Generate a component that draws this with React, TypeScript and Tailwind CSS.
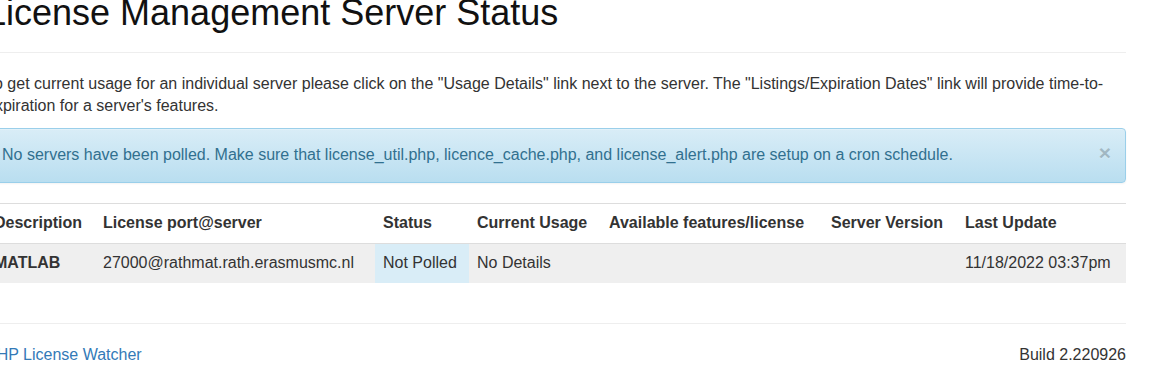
import React from "react";

const cols = [
  { label: "Description", w: "w-[109px]" },
  { label: "License port@server", w: "w-[280px]" },
  { label: "Status", w: "w-[94px]" },
  { label: "Current Usage", w: "w-[132px]" },
  { label: "Available features/license", w: "w-[222px]" },
  { label: "Server Version", w: "w-[134px]" },
  { label: "Last Update", w: "w-[169px]" },
];

export default function App() {
  return (
    <div className="bg-white min-h-screen overflow-hidden font-['Liberation_Sans',Arial,sans-serif] text-[16px] leading-[1.428571] text-[#333]">
      <div className="ml-[-14px] w-[1140px]">
        <div className="pb-[9px] border-b border-[#eee] mb-5">
          <h1 className="mt-[-7px] mb-[10px] text-[36px] leading-[1.1] font-normal text-[#111]">
            License Management Server Status
          </h1>
        </div>

        <p className="mb-[10px]">
          To get current usage for an individual server please click on the "Usage Details" link next to the server. The "Listings/Expiration Dates" link will provide time-to-expiration for a server's features.
        </p>

        <div className="relative mb-5 p-[15px] pr-[35px] rounded-[4px] border border-[#9acfea] text-[#31708f] bg-[linear-gradient(to_bottom,#d9edf7_0%,#b9def0_100%)] shadow-[inset_0_1px_0_rgba(255,255,255,0.25),0_1px_2px_rgba(0,0,0,0.05)]">
          <button className="float-right relative top-[-2px] right-[-21px] text-[21px] font-bold leading-none text-black opacity-20 [text-shadow:0_1px_0_#fff]">
            ×
          </button>
          No servers have been polled. Make sure that license_util.php, licence_cache.php, and license_alert.php are setup on a cron schedule.
        </div>

        <table className="w-[1140px] table-fixed border-collapse">
          <tbody>
            <tr>
              {cols.map((c) => (
                <th
                  key={c.label}
                  className={`${c.w} text-left align-top font-bold p-2 border-t border-[#ddd] whitespace-nowrap`}
                >
                  {c.label}
                </th>
              ))}
            </tr>
            <tr className="bg-[#efefef]">
              <td className="p-2 border-t border-[#ddd] font-bold align-top">MATLAB</td>
              <td className="p-2 border-t border-[#ddd] align-top whitespace-nowrap">27000@rathmat.rath.erasmusmc.nl</td>
              <td className="p-2 border-t border-[#ddd] align-top bg-[#d9edf7] whitespace-nowrap">Not Polled</td>
              <td className="p-2 border-t border-[#ddd] align-top whitespace-nowrap">No Details</td>
              <td className="p-2 border-t border-[#ddd] align-top"></td>
              <td className="p-2 border-t border-[#ddd] align-top"></td>
              <td className="p-2 border-t border-[#ddd] align-top whitespace-nowrap">11/18/2022 03:37pm</td>
            </tr>
          </tbody>
        </table>

        <hr className="mt-10 mb-5 border-0 border-t border-[#eee]" />

        <div className="flex justify-between">
          <a href="#" className="text-[#337ab7] no-underline">PHP License Watcher</a>
          <span>Build 2.220926</span>
        </div>
      </div>
    </div>
  );
}
